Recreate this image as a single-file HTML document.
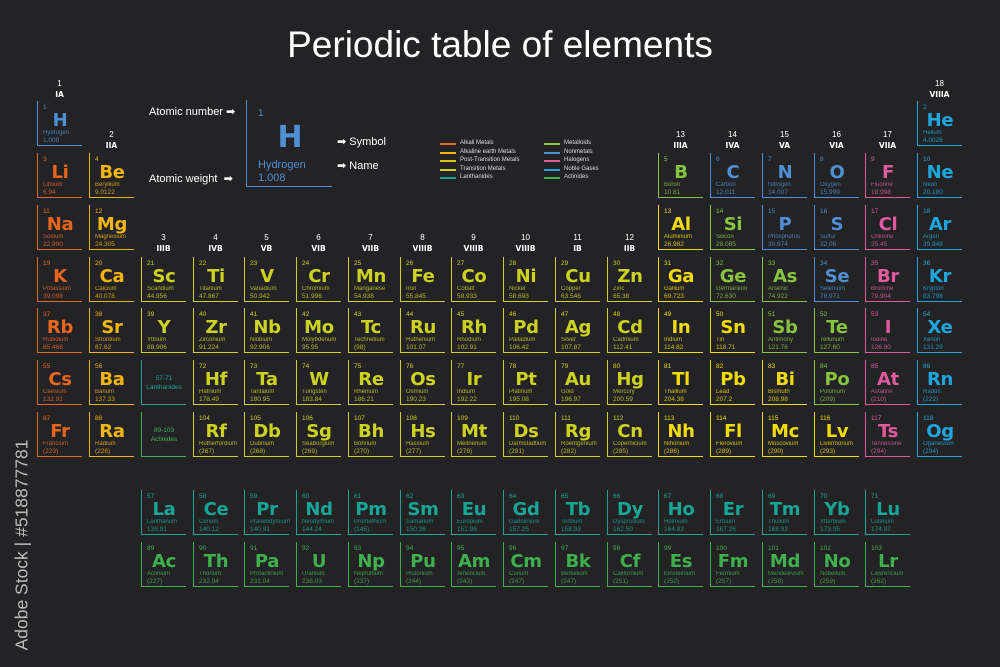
<!DOCTYPE html><html><head><meta charset="utf-8"><style>
body{margin:0;width:1000px;height:667px;background:#232326;position:relative;overflow:hidden;font-family:"Liberation Sans","DejaVu Sans",sans-serif;color:#fff}
.c{position:absolute;width:45px;height:45px;border-left:1.5px solid;border-bottom:1.5px solid;box-sizing:border-box}
.c i{position:absolute;left:5px;top:3px;font-size:6.5px;font-style:normal}
.c b{position:absolute;left:0;top:9px;width:100%;text-align:center;font-family:"DejaVu Sans",sans-serif;font-weight:bold;font-size:18px;letter-spacing:-0.3px}
.c s{position:absolute;left:5px;top:29px;font-size:6px;text-decoration:none;white-space:nowrap;opacity:.85}
.c u{position:absolute;left:5px;top:36px;font-size:6.5px;text-decoration:none;opacity:.85}
.c em{position:absolute;left:0;width:100%;text-align:center;top:14px;font-size:6.5px;font-style:normal;line-height:9px}
.a{color:#e8651e}.e{color:#f2b50c}.t{color:#cdd21e}.p{color:#f2dc00}.m{color:#86c440}.n{color:#4f8fd3}.h{color:#e05aa0}.g{color:#1ea6dc}.l{color:#16a596}.k{color:#3fb04c}
.x1{left:37px}.x2{left:89px}.x3{left:141px}.x4{left:193px}.x5{left:244px}.x6{left:296px}.x7{left:348px}.x8{left:400px}.x9{left:451px}.x10{left:503px}.x11{left:555px}.x12{left:607px}.x13{left:658px}.x14{left:710px}.x15{left:762px}.x16{left:814px}.x17{left:865px}.x18{left:917px}
.y1{top:101px}.y2{top:153px}.y3{top:205px}.y4{top:257px}.y5{top:308px}.y6{top:360px}.y7{top:412px}.y8{top:490px}.y9{top:542px}
.gh{position:absolute;width:45px;text-align:center;font-size:8px;line-height:11px}
.gh b{display:block;font-family:"DejaVu Sans",sans-serif;font-size:7.5px}
.lg{position:absolute;font-size:6px;color:#ddd}
.lg span{position:absolute;left:-20px;top:3px;width:16px;height:2px}
.lab{position:absolute;font-size:11px;color:#fff;white-space:nowrap}
</style></head><body>
<div style="position:absolute;left:0;width:1000px;top:24px;text-align:center;font-size:37px">Periodic table of elements</div>
<div style="position:absolute;left:22px;top:545px;transform:translate(-50%,-50%) rotate(-90deg);font-size:17.5px;color:#bbb;white-space:nowrap">Adobe Stock | #518877781</div>

<div class="gh x1" style="top:78px">1<b>IA</b></div>
<div class="gh x2" style="top:129px">2<b>IIA</b></div>
<div class="gh x3" style="top:232px">3<b>IIIB</b></div>
<div class="gh x4" style="top:232px">4<b>IVB</b></div>
<div class="gh x5" style="top:232px">5<b>VB</b></div>
<div class="gh x6" style="top:232px">6<b>VIB</b></div>
<div class="gh x7" style="top:232px">7<b>VIIB</b></div>
<div class="gh x8" style="top:232px">8<b>VIIIB</b></div>
<div class="gh x9" style="top:232px">9<b>VIIIB</b></div>
<div class="gh x10" style="top:232px">10<b>VIIIB</b></div>
<div class="gh x11" style="top:232px">11<b>IB</b></div>
<div class="gh x12" style="top:232px">12<b>IIB</b></div>
<div class="gh x13" style="top:129px">13<b>IIIA</b></div>
<div class="gh x14" style="top:129px">14<b>IVA</b></div>
<div class="gh x15" style="top:129px">15<b>VA</b></div>
<div class="gh x16" style="top:129px">16<b>VIA</b></div>
<div class="gh x17" style="top:129px">17<b>VIIA</b></div>
<div class="gh x18" style="top:78px">18<b>VIIIA</b></div>

<div class="lab" style="left:149px;top:105px">Atomic number ➡</div>
<div class="lab" style="left:149px;top:172px">Atomic weight &nbsp;➡</div>
<div style="position:absolute;left:246px;top:100px;width:86px;height:87px;border-left:1.5px solid #4f8fd3;border-bottom:1.5px solid #4f8fd3;box-sizing:border-box;color:#4f8fd3">
<div style="position:absolute;left:11px;top:8px;font-size:10px">1</div>
<div style="position:absolute;left:0;width:86px;text-align:center;top:20px;font-family:'DejaVu Sans',sans-serif;font-weight:bold;font-size:30px">H</div>
<div style="position:absolute;left:11px;top:59px;font-size:11px">Hydrogen</div>
<div style="position:absolute;left:11px;top:72px;font-size:11px">1.008</div></div>
<div class="lab" style="left:337px;top:135px">➡ Symbol</div>
<div class="lab" style="left:337px;top:159px">➡ Name</div>

<div class="lg" style="left:460px;top:140px"><span style="background:#e8651e"></span>Alkali Metals</div>
<div class="lg" style="left:460px;top:148.5px"><span style="background:#f2b50c"></span>Alkaline earth Metals</div>
<div class="lg" style="left:460px;top:157px"><span style="background:#d8c410"></span>Post-Transition Metals</div>
<div class="lg" style="left:460px;top:165.5px"><span style="background:#cdd21e"></span>Transition Metals</div>
<div class="lg" style="left:460px;top:174px"><span style="background:#16a596"></span>Lanthanides</div>
<div class="lg" style="left:564px;top:140px"><span style="background:#86c440"></span>Metalloids</div>
<div class="lg" style="left:564px;top:148.5px"><span style="background:#4f8fd3"></span>Nonmetals</div>
<div class="lg" style="left:564px;top:157px"><span style="background:#e05aa0"></span>Halogens</div>
<div class="lg" style="left:564px;top:165.5px"><span style="background:#1ea6dc"></span>Noble Gases</div>
<div class="lg" style="left:564px;top:174px"><span style="background:#3fb04c"></span>Actinides</div>

<div class="c n x1 y1"><i>1</i><b>H</b><s>Hydrogen</s><u>1.008</u></div>
<div class="c g x18 y1"><i>2</i><b>He</b><s>Helium</s><u>4.0026</u></div>

<div class="c a x1 y2"><i>3</i><b>Li</b><s>Lithium</s><u>6.94</u></div>
<div class="c e x2 y2"><i>4</i><b>Be</b><s>Beryllium</s><u>9.0122</u></div>
<div class="c m x13 y2"><i>5</i><b>B</b><s>Boron</s><u>10.81</u></div>
<div class="c n x14 y2"><i>6</i><b>C</b><s>Carbon</s><u>12.011</u></div>
<div class="c n x15 y2"><i>7</i><b>N</b><s>Nitrogen</s><u>14.007</u></div>
<div class="c n x16 y2"><i>8</i><b>O</b><s>Oxygen</s><u>15.999</u></div>
<div class="c h x17 y2"><i>9</i><b>F</b><s>Fluorine</s><u>18.998</u></div>
<div class="c g x18 y2"><i>10</i><b>Ne</b><s>Neon</s><u>20.180</u></div>

<div class="c a x1 y3"><i>11</i><b>Na</b><s>Sodium</s><u>22.990</u></div>
<div class="c e x2 y3"><i>12</i><b>Mg</b><s>Magnesium</s><u>24.305</u></div>
<div class="c p x13 y3"><i>13</i><b>Al</b><s>Aluminium</s><u>26.982</u></div>
<div class="c m x14 y3"><i>14</i><b>Si</b><s>Silicon</s><u>28.085</u></div>
<div class="c n x15 y3"><i>15</i><b>P</b><s>Phosphorus</s><u>30.974</u></div>
<div class="c n x16 y3"><i>16</i><b>S</b><s>Sulfur</s><u>32.06</u></div>
<div class="c h x17 y3"><i>17</i><b>Cl</b><s>Chlorine</s><u>35.45</u></div>
<div class="c g x18 y3"><i>18</i><b>Ar</b><s>Argon</s><u>39.948</u></div>

<div class="c a x1 y4"><i>19</i><b>K</b><s>Potassium</s><u>39.098</u></div>
<div class="c e x2 y4"><i>20</i><b>Ca</b><s>Calcium</s><u>40.078</u></div>
<div class="c t x3 y4"><i>21</i><b>Sc</b><s>Scandium</s><u>44.956</u></div>
<div class="c t x4 y4"><i>22</i><b>Ti</b><s>Titanium</s><u>47.867</u></div>
<div class="c t x5 y4"><i>23</i><b>V</b><s>Vanadium</s><u>50.942</u></div>
<div class="c t x6 y4"><i>24</i><b>Cr</b><s>Chromium</s><u>51.996</u></div>
<div class="c t x7 y4"><i>25</i><b>Mn</b><s>Manganese</s><u>54.938</u></div>
<div class="c t x8 y4"><i>26</i><b>Fe</b><s>Iron</s><u>55.845</u></div>
<div class="c t x9 y4"><i>27</i><b>Co</b><s>Cobalt</s><u>58.933</u></div>
<div class="c t x10 y4"><i>28</i><b>Ni</b><s>Nickel</s><u>58.693</u></div>
<div class="c t x11 y4"><i>29</i><b>Cu</b><s>Copper</s><u>63.546</u></div>
<div class="c t x12 y4"><i>30</i><b>Zn</b><s>Zinc</s><u>65.38</u></div>
<div class="c p x13 y4"><i>31</i><b>Ga</b><s>Gallium</s><u>69.723</u></div>
<div class="c m x14 y4"><i>32</i><b>Ge</b><s>Germanium</s><u>72.630</u></div>
<div class="c m x15 y4"><i>33</i><b>As</b><s>Arsenic</s><u>74.922</u></div>
<div class="c n x16 y4"><i>34</i><b>Se</b><s>Selenium</s><u>78.971</u></div>
<div class="c h x17 y4"><i>35</i><b>Br</b><s>Bromine</s><u>79.904</u></div>
<div class="c g x18 y4"><i>36</i><b>Kr</b><s>Krypton</s><u>83.798</u></div>

<div class="c a x1 y5"><i>37</i><b>Rb</b><s>Rubidium</s><u>85.468</u></div>
<div class="c e x2 y5"><i>38</i><b>Sr</b><s>Strontium</s><u>87.62</u></div>
<div class="c t x3 y5"><i>39</i><b>Y</b><s>Yttrium</s><u>88.906</u></div>
<div class="c t x4 y5"><i>40</i><b>Zr</b><s>Zirconium</s><u>91.224</u></div>
<div class="c t x5 y5"><i>41</i><b>Nb</b><s>Niobium</s><u>92.906</u></div>
<div class="c t x6 y5"><i>42</i><b>Mo</b><s>Molybdenum</s><u>95.95</u></div>
<div class="c t x7 y5"><i>43</i><b>Tc</b><s>Technetium</s><u>(98)</u></div>
<div class="c t x8 y5"><i>44</i><b>Ru</b><s>Ruthenium</s><u>101.07</u></div>
<div class="c t x9 y5"><i>45</i><b>Rh</b><s>Rhodium</s><u>102.91</u></div>
<div class="c t x10 y5"><i>46</i><b>Pd</b><s>Palladium</s><u>106.42</u></div>
<div class="c t x11 y5"><i>47</i><b>Ag</b><s>Silver</s><u>107.87</u></div>
<div class="c t x12 y5"><i>48</i><b>Cd</b><s>Cadmium</s><u>112.41</u></div>
<div class="c p x13 y5"><i>49</i><b>In</b><s>Indium</s><u>114.82</u></div>
<div class="c p x14 y5"><i>50</i><b>Sn</b><s>Tin</s><u>118.71</u></div>
<div class="c m x15 y5"><i>51</i><b>Sb</b><s>Antimony</s><u>121.76</u></div>
<div class="c m x16 y5"><i>52</i><b>Te</b><s>Tellurium</s><u>127.60</u></div>
<div class="c h x17 y5"><i>53</i><b>I</b><s>Iodine</s><u>126.90</u></div>
<div class="c g x18 y5"><i>54</i><b>Xe</b><s>Xenon</s><u>131.29</u></div>

<div class="c a x1 y6"><i>55</i><b>Cs</b><s>Caesium</s><u>132.91</u></div>
<div class="c e x2 y6"><i>56</i><b>Ba</b><s>Barium</s><u>137.33</u></div>
<div class="c l x3 y6"><em>57-71<br>Lanthanides</em></div>
<div class="c t x4 y6"><i>72</i><b>Hf</b><s>Hafnium</s><u>178.49</u></div>
<div class="c t x5 y6"><i>73</i><b>Ta</b><s>Tantalum</s><u>180.95</u></div>
<div class="c t x6 y6"><i>74</i><b>W</b><s>Tungsten</s><u>183.84</u></div>
<div class="c t x7 y6"><i>75</i><b>Re</b><s>Rhenium</s><u>186.21</u></div>
<div class="c t x8 y6"><i>76</i><b>Os</b><s>Osmium</s><u>190.23</u></div>
<div class="c t x9 y6"><i>77</i><b>Ir</b><s>Iridium</s><u>192.22</u></div>
<div class="c t x10 y6"><i>78</i><b>Pt</b><s>Platinum</s><u>195.08</u></div>
<div class="c t x11 y6"><i>79</i><b>Au</b><s>Gold</s><u>196.97</u></div>
<div class="c t x12 y6"><i>80</i><b>Hg</b><s>Mercury</s><u>200.59</u></div>
<div class="c p x13 y6"><i>81</i><b>Tl</b><s>Thallium</s><u>204.38</u></div>
<div class="c p x14 y6"><i>82</i><b>Pb</b><s>Lead</s><u>207.2</u></div>
<div class="c p x15 y6"><i>83</i><b>Bi</b><s>Bismuth</s><u>208.98</u></div>
<div class="c m x16 y6"><i>84</i><b>Po</b><s>Polonium</s><u>(209)</u></div>
<div class="c h x17 y6"><i>85</i><b>At</b><s>Astatine</s><u>(210)</u></div>
<div class="c g x18 y6"><i>86</i><b>Rn</b><s>Radon</s><u>(222)</u></div>

<div class="c a x1 y7"><i>87</i><b>Fr</b><s>Francium</s><u>(223)</u></div>
<div class="c e x2 y7"><i>88</i><b>Ra</b><s>Radium</s><u>(226)</u></div>
<div class="c k x3 y7"><em>89-103<br>Actinides</em></div>
<div class="c t x4 y7"><i>104</i><b>Rf</b><s>Rutherfordium</s><u>(267)</u></div>
<div class="c t x5 y7"><i>105</i><b>Db</b><s>Dubnium</s><u>(268)</u></div>
<div class="c t x6 y7"><i>106</i><b>Sg</b><s>Seaborgium</s><u>(269)</u></div>
<div class="c t x7 y7"><i>107</i><b>Bh</b><s>Bohrium</s><u>(270)</u></div>
<div class="c t x8 y7"><i>108</i><b>Hs</b><s>Hassium</s><u>(277)</u></div>
<div class="c t x9 y7"><i>109</i><b>Mt</b><s>Meitnerium</s><u>(278)</u></div>
<div class="c t x10 y7"><i>110</i><b>Ds</b><s>Darmstadtium</s><u>(281)</u></div>
<div class="c t x11 y7"><i>111</i><b>Rg</b><s>Roentgenium</s><u>(282)</u></div>
<div class="c t x12 y7"><i>112</i><b>Cn</b><s>Copernicium</s><u>(285)</u></div>
<div class="c p x13 y7"><i>113</i><b>Nh</b><s>Nihonium</s><u>(286)</u></div>
<div class="c p x14 y7"><i>114</i><b>Fl</b><s>Flerovium</s><u>(289)</u></div>
<div class="c p x15 y7"><i>115</i><b>Mc</b><s>Moscovium</s><u>(290)</u></div>
<div class="c p x16 y7"><i>116</i><b>Lv</b><s>Livermorium</s><u>(293)</u></div>
<div class="c h x17 y7"><i>117</i><b>Ts</b><s>Tennessine</s><u>(294)</u></div>
<div class="c g x18 y7"><i>118</i><b>Og</b><s>Oganesson</s><u>(294)</u></div>

<div class="c l x3 y8"><i>57</i><b>La</b><s>Lanthanum</s><u>138.91</u></div>
<div class="c l x4 y8"><i>58</i><b>Ce</b><s>Cerium</s><u>140.12</u></div>
<div class="c l x5 y8"><i>59</i><b>Pr</b><s>Praseodymium</s><u>140.91</u></div>
<div class="c l x6 y8"><i>60</i><b>Nd</b><s>Neodymium</s><u>144.24</u></div>
<div class="c l x7 y8"><i>61</i><b>Pm</b><s>Promethium</s><u>(145)</u></div>
<div class="c l x8 y8"><i>62</i><b>Sm</b><s>Samarium</s><u>150.36</u></div>
<div class="c l x9 y8"><i>63</i><b>Eu</b><s>Europium</s><u>151.96</u></div>
<div class="c l x10 y8"><i>64</i><b>Gd</b><s>Gadolinium</s><u>157.25</u></div>
<div class="c l x11 y8"><i>65</i><b>Tb</b><s>Terbium</s><u>158.93</u></div>
<div class="c l x12 y8"><i>66</i><b>Dy</b><s>Dysprosium</s><u>162.50</u></div>
<div class="c l x13 y8"><i>67</i><b>Ho</b><s>Holmium</s><u>164.93</u></div>
<div class="c l x14 y8"><i>68</i><b>Er</b><s>Erbium</s><u>167.26</u></div>
<div class="c l x15 y8"><i>69</i><b>Tm</b><s>Thulium</s><u>168.93</u></div>
<div class="c l x16 y8"><i>70</i><b>Yb</b><s>Ytterbium</s><u>173.05</u></div>
<div class="c l x17 y8"><i>71</i><b>Lu</b><s>Lutetium</s><u>174.97</u></div>

<div class="c k x3 y9"><i>89</i><b>Ac</b><s>Actinium</s><u>(227)</u></div>
<div class="c k x4 y9"><i>90</i><b>Th</b><s>Thorium</s><u>232.04</u></div>
<div class="c k x5 y9"><i>91</i><b>Pa</b><s>Protactinium</s><u>231.04</u></div>
<div class="c k x6 y9"><i>92</i><b>U</b><s>Uranium</s><u>238.03</u></div>
<div class="c k x7 y9"><i>93</i><b>Np</b><s>Neptunium</s><u>(237)</u></div>
<div class="c k x8 y9"><i>94</i><b>Pu</b><s>Plutonium</s><u>(244)</u></div>
<div class="c k x9 y9"><i>95</i><b>Am</b><s>Americium</s><u>(243)</u></div>
<div class="c k x10 y9"><i>96</i><b>Cm</b><s>Curium</s><u>(247)</u></div>
<div class="c k x11 y9"><i>97</i><b>Bk</b><s>Berkelium</s><u>(247)</u></div>
<div class="c k x12 y9"><i>98</i><b>Cf</b><s>Californium</s><u>(251)</u></div>
<div class="c k x13 y9"><i>99</i><b>Es</b><s>Einsteinium</s><u>(252)</u></div>
<div class="c k x14 y9"><i>100</i><b>Fm</b><s>Fermium</s><u>(257)</u></div>
<div class="c k x15 y9"><i>101</i><b>Md</b><s>Mendelevium</s><u>(258)</u></div>
<div class="c k x16 y9"><i>102</i><b>No</b><s>Nobelium</s><u>(259)</u></div>
<div class="c k x17 y9"><i>103</i><b>Lr</b><s>Lawrencium</s><u>(262)</u></div>
</body></html>
